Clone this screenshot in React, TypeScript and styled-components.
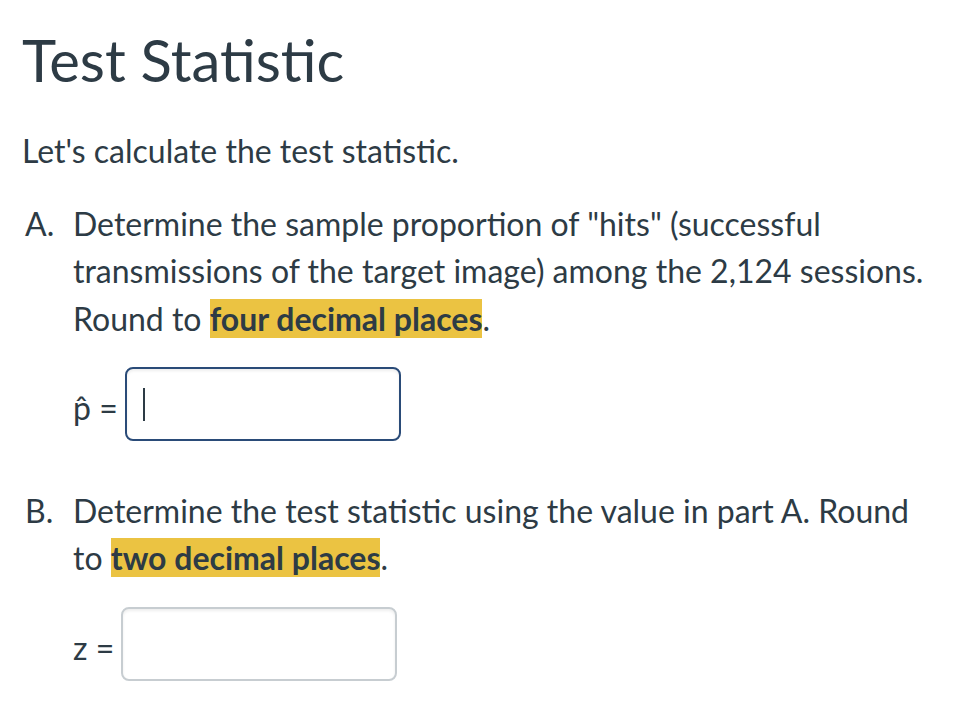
import React from 'react';
import styled, { createGlobalStyle } from 'styled-components';

const GlobalStyle = createGlobalStyle`
  html, body {
    margin: 0;
    background: #ffffff;
  }

  body {
    font-family: Lato, 'Noto Sans', 'Liberation Sans', sans-serif;
    color: #2d3b45;
  }
`;

const Page = styled.main`
  padding: 24px 22px 0 22px;
`;

const Title = styled.h1`
  margin: 0;
  font-size: 58px;
  font-weight: 400;
  line-height: 72px;
`;

const Intro = styled.p`
  margin: 31px 0 0;
  font-size: 32px;
  line-height: 47.5px;
`;

const Steps = styled.ol`
  margin: 25px 0 0;
  padding: 0;
  list-style: none;
  display: flex;
  flex-direction: column;
  gap: 45.5px;
`;

const Step = styled.li`
  display: grid;
  grid-template-columns: 51px 1fr;
  font-size: 32px;
  line-height: 47.5px;
`;

const Marker = styled.span`
  padding-left: 3px;
`;

const StepBody = styled.div`
  display: flex;
  flex-direction: column;
  gap: 25px;
`;

const Prompt = styled.p`
  margin: 0;
`;

const Mark = styled.mark`
  background: #ebc342;
  color: #2d3b45;
  font-weight: 700;
`;

const AnswerRow = styled.div`
  display: flex;
  align-items: center;
  gap: 7px;
`;

const AnswerLabel = styled.span`
  padding-top: 8px;
  white-space: nowrap;
`;

const AnswerBox = styled.div<{ $focused?: boolean }>`
  box-sizing: border-box;
  width: 276px;
  height: 74px;
  padding: 0 16px;
  display: flex;
  align-items: center;
  border: 2px solid ${(p) => (p.$focused ? '#2a4b78' : '#c7cdd1')};
  border-radius: 8px;
  background: #ffffff;
  box-shadow: inset 0 2px 3px rgba(0, 0, 0, 0.07);
`;

const Caret = styled.span`
  display: block;
  width: 2px;
  height: 33px;
  background: #2d3b45;
`;

export default function App() {
  return (
    <Page>
      <GlobalStyle />
      <Title>Test Statistic</Title>
      <Intro>Let's calculate the test statistic.</Intro>
      <Steps>
        <Step>
          <Marker>A.</Marker>
          <StepBody>
            <Prompt>
              Determine the sample proportion of "hits" (successful transmissions of the
              target image) among the 2,124 sessions. Round to <Mark>four decimal places</Mark>.
            </Prompt>
            <AnswerRow>
              <AnswerLabel>p̂ =</AnswerLabel>
              <AnswerBox $focused>
                <Caret />
              </AnswerBox>
            </AnswerRow>
          </StepBody>
        </Step>
        <Step>
          <Marker>B.</Marker>
          <StepBody>
            <Prompt>
              Determine the test statistic using the value in part A. Round to{' '}
              <Mark>two decimal places</Mark>.
            </Prompt>
            <AnswerRow>
              <AnswerLabel>z =</AnswerLabel>
              <AnswerBox />
            </AnswerRow>
          </StepBody>
        </Step>
      </Steps>
    </Page>
  );
}
